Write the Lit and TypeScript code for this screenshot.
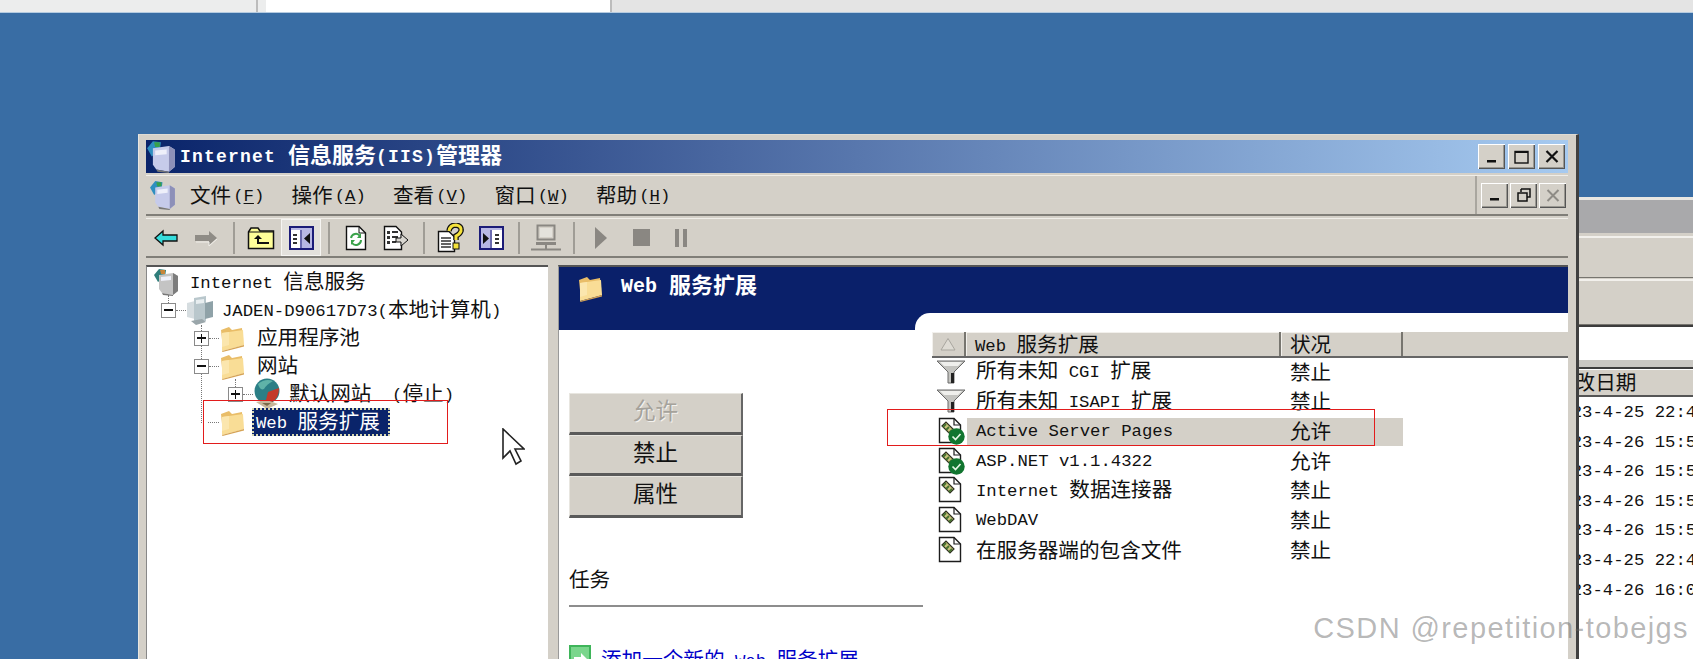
import { LitElement, html, css, svg } from "lit";
import { customElement } from "lit/decorators.js";

const t = (s: string) =>
  s.split(/([\x00-\x7f]+)/).filter(Boolean).map((p) =>
    /^[\x00-\x7f]/.test(p) ? html`<span class="l">${p}</span>` : html`<span>${p}</span>`
  );

const ic = (w: number, h: number, body: unknown, cls = "") =>
  html`<svg class="ic ${cls}" width=${w} height=${h} viewBox="0 0 ${w} ${h}">${body}</svg>`;

const folder = () => ic(26, 27, svg`
  <path d="M2 5 L10 2 L13 5 L23 3 L24 20 L4 25 Z" fill="#e9bd68"/>
  <path d="M3 8 L24 5 L25 20 L3 26 Z" fill="#f9dd96"/>
  <path d="M3 26 L25 20 L25 21.5 L3.5 27 Z" fill="#d5a355"/>
  <path d="M3 8 L10 7 L10 20 L3 22 Z" fill="#fbe6ae"/>`);

const mmc = (w = 27, h = 28, gray = false) => ic(w, h, svg`
  <g transform="scale(${w / 27} ${h / 28})">
  <path d="M1 7 L6 1 L13 2 L12 9 L5 14 Z" fill=${gray ? "#2f7d7a" : "#2f8fc0"}/>
  <path d="M7 2 L12 2 L12 6 L8 6 Z" fill=${gray ? "#c9863a" : "#39a04a"}/>
  <path d="M6 7 L20 5 L25 8 L25 23 L20 27 L9 25 L6 21 Z" fill=${gray ? "#c4c4c4" : "#c6cbea"}/>
  <path d="M20 5 L25 8 L25 23 L20 27 Z" fill=${gray ? "#7c7c7c" : "#8d90b8"}/>
  <path d="M8 9 L18 8 L18 12 L8 13 Z" fill="#eef0fa"/>
  <path d="M9 25 L20 27 L20 28 L10 27 Z" fill="#777"/></g>`);

const server = () => ic(28, 30, svg`
  <path d="M1 8 L9 6 L9 24 L1 22 Z" fill="#d6dde0"/>
  <path d="M8 3 L20 1 L20 26 L8 28 Z" fill="#b9c7cc"/>
  <path d="M10 5 L18 4 L18 8 L10 9 Z" fill="#e8eef0"/>
  <path d="M19 8 L27 6 L27 22 L19 24 Z" fill="#8fa2a8"/>
  <path d="M5 26 L16 24 L20 27 L10 30 Z" fill="#9aa6aa"/>`);

const globe = () => ic(28, 32, svg`
  <circle cx="14" cy="13" r="12.5" fill="#2b7f86"/>
  <path d="M5 6 Q12 0 20 3 Q14 6 11 11 Q7 13 5 6Z" fill="#5fb3a8"/>
  <path d="M15 14 L26 10 Q26 20 19 24 L13 22 Z" fill="#c33a2a"/>
  <path d="M3 24 L14 22 L25 26 L14 31 Z" fill="#c7b79a"/>
  <path d="M9 25 L18 25 L14 28 Z" fill="#7a6a4a"/>`);

const funnel = () => ic(30, 24, svg`
  <path d="M1 1 H29 L18 12 V23 H12 V12 Z" fill="#c4c4c0" stroke="#6a6a6a" stroke-width="1"/>
  <path d="M4 2 H26 L22 6 H8 Z" fill="#efefec"/>
  <path d="M15 13 H18 V23 H15 Z" fill="#222"/>`);

const plug = () => svg`
  <path d="M5 9 L9 5 L17 13 L13 17 Z" fill="#c6c27a" stroke="#2e2e20" stroke-width="1.2"/>
  <path d="M6 10 L9 7 M9 13 L12 10 M12 16 L15 13" stroke="#44702f" stroke-width="1.8"/>`;

const extDoc = (ok: boolean) => ic(28, 28, svg`
  <path d="M2.5 1.5 H17 L23.5 8 V25.5 H2.5 Z" fill="#fff" stroke="#1c1c1c" stroke-width="1.4"/>
  <path d="M17 1.5 V8 H23.5" fill="none" stroke="#1c1c1c" stroke-width="1.2"/>
  ${plug()}
  ${ok ? svg`<circle cx="19.5" cy="19.5" r="8.2" fill="#10752f"/>
  <path d="M15.5 19.5 L18.5 22.5 L23.5 17" fill="none" stroke="#e6f6e6" stroke-width="1.7"/>` : ""}`);

const backArrow = ic(24, 18, svg`<path d="M1 9 L9 2 V6 H23 V12 H9 V16 Z" fill="#35dcdc" stroke="#111" stroke-width="1.3"/>`);
const fwdArrow = ic(24, 18, svg`<path d="M23 9 L15 2 V6 H1 V12 H15 V16 Z" fill="#8f8c86"/><path d="M2 13 H15 V17 L23 10" fill="none" stroke="#f0eee9"/>`);
const upFolder = ic(28, 24, svg`
  <path d="M1.5 6 L4 2 H11 L13 5 H26.5 V22.5 H1.5 Z" fill="#ffff99" stroke="#111" stroke-width="1.5"/>
  <path d="M1.5 6 H26" stroke="#111"/>
  <path d="M11 9 L7 13 H10 V18 H22 V16 H12 V13 H15 Z" fill="#111"/>`);
const paneL = ic(25, 24, svg`
  <rect x="1" y="1" width="23" height="22" fill="#b8b8e4" stroke="#1c1c78" stroke-width="2"/>
  <rect x="2" y="4" width="9" height="18" fill="#fff"/><path d="M12 4 V22" stroke="#1c1c78"/>
  <path d="M4 8h4v2H4zM4 12h4v2H4zM4 16h4v2H4z" fill="#333"/><path d="M21 7 V18 L15 12.5 Z" fill="#111"/>`);
const paneR = ic(25, 24, svg`
  <rect x="1" y="1" width="23" height="22" fill="#b8b8e4" stroke="#1c1c78" stroke-width="2"/>
  <rect x="13" y="4" width="10" height="18" fill="#fff"/><path d="M12 4 V22" stroke="#1c1c78"/>
  <path d="M16 8h4v2h-4zM16 12h4v2h-4zM16 16h4v2h-4z" fill="#333"/><path d="M4 7 V18 L10 12.5 Z" fill="#111"/>`);
const docRefresh = ic(22, 26, svg`
  <path d="M1.5 1.5 H14 L20.5 8 V24.5 H1.5 Z" fill="#fff" stroke="#111" stroke-width="1.4"/><path d="M14 1.5 V8 H20.5" fill="none" stroke="#111"/>
  <path d="M6 13 A5 5 0 0 1 15 11 M16 15 A5 5 0 0 1 7 18" fill="none" stroke="#3aa24a" stroke-width="2"/>
  <path d="M16 8 V13 H12 Z M6 20 V15 H10 Z" fill="#3aa24a"/>`);
const docExport = ic(26, 26, svg`
  <path d="M1.5 1.5 H13 L18.5 7 V24.5 H1.5 Z" fill="#fff" stroke="#111" stroke-width="1.4"/>
  <path d="M4 6h3v3H4zM9 6h6v2H9zM4 11h3v3H4zM9 11h6v2H9zM4 16h3v3H4zM9 16h4v2H9z" fill="#333"/>
  <path d="M13 13 H18 V9 L25 15 L18 21 V17 H13 Z" fill="#d8d6d0" stroke="#111"/>`);
const helpIc = ic(28, 30, svg`
  <path d="M1.5 8.5 H12 L17.5 14 V28.5 H1.5 Z" fill="#fff" stroke="#111" stroke-width="1.4"/>
  <path d="M4 15h10M4 18h10M4 21h10M4 24h10" stroke="#333" stroke-width="1.3"/>
  <path d="M12 8 Q13 2 19 2 Q25 3 24 8 Q23 11 19 13 V17" fill="none" stroke="#111" stroke-width="5.5"/>
  <path d="M12 8 Q13 2 19 2 Q25 3 24 8 Q23 11 19 13 V17" fill="none" stroke="#f5e23a" stroke-width="3"/>
  <rect x="16" y="20" width="6" height="6" fill="#f5e23a" stroke="#111"/>`);
const netPc = ic(30, 28, svg`
  <rect x="6.5" y="1.5" width="17" height="14" fill="#d4d0c8" stroke="#8a8782" stroke-width="2"/>
  <rect x="9" y="4" width="12" height="9" fill="#e4e2dc"/>
  <path d="M5 18h20v3H5z" fill="#8a8782"/><path d="M15 21v4M0 25.5h30" stroke="#8a8782" stroke-width="2"/>`);
const playIc = ic(12, 22, svg`<path d="M0 0 L12 11 L0 22 Z" fill="#8a8782"/>`);
const stopIc = ic(17, 17, svg`<rect width="17" height="17" fill="#8a8782"/>`);
const pauseIc = ic(12, 18, svg`<path d="M0 0h4v18H0zM8 0h4v18H8z" fill="#8a8782"/>`);

const capMin = ic(12, 12, svg`<path d="M1 9h9v2.5H1z" fill="#111"/>`);
const capMax = ic(15, 14, svg`<rect x="1" y="1.5" width="13" height="11.5" fill="none" stroke="#111" stroke-width="1.4"/><path d="M1 2h13" stroke="#111" stroke-width="2"/>`);
const capClose = ic(14, 13, svg`<path d="M1.5 1 L12.5 12 M12.5 1 L1.5 12" stroke="#111" stroke-width="2.2"/>`);
const capRestore = ic(14, 14, svg`<path d="M4 1h9v8h-3M4 1v3" fill="none" stroke="#111" stroke-width="1.5"/><rect x="1" y="5" width="9" height="8" fill="none" stroke="#111" stroke-width="1.5"/>`);
const capCloseOff = ic(14, 13, svg`<path d="M1.5 1 L12.5 12 M12.5 1 L1.5 12" stroke="#8f8c86" stroke-width="2"/>`);

const box = (minus: boolean) => html`<span class="box"><i class="h"></i>${minus ? "" : html`<i class="v"></i>`}</span>`;

const tree = [
  { cls: "l0", icon: mmc(27, 28, true), text: "Internet 信息服务" },
  { cls: "l1", b: true, icon: server(), text: "JADEN-D90617D73(本地计算机)" },
  { cls: "l2", b: false, icon: folder(), text: "应用程序池" },
  { cls: "l2", b: true, icon: folder(), text: "网站" },
  { cls: "l3", b: false, icon: globe(), text: "默认网站  (停止)" },
  { cls: "l2 nobox", icon: folder(), text: "Web 服务扩展", sel: true },
];

const exts = [
  { i: "f", n: "所有未知 CGI 扩展", s: "禁止" },
  { i: "f", n: "所有未知 ISAPI 扩展", s: "禁止" },
  { i: "k", n: "Active Server Pages", s: "允许", sel: true },
  { i: "k", n: "ASP.NET v1.1.4322", s: "允许" },
  { i: "d", n: "Internet 数据连接器", s: "禁止" },
  { i: "d", n: "WebDAV", s: "禁止" },
  { i: "d", n: "在服务器端的包含文件", s: "禁止" },
];

const dates = ["2023-4-25 22:41", "2023-4-26 15:52", "2023-4-26 15:52", "2023-4-26 15:52", "2023-4-26 15:52", "2023-4-25 22:41", "2023-4-26 16:01"];

const menus: [string, string][] = [["文件", "F"], ["操作", "A"], ["查看", "V"], ["窗口", "W"], ["帮助", "H"]];

@customElement("app-root")
export class AppRoot extends LitElement {
  static styles = css`
    :host { display: block; position: relative; width: 1693px; height: 659px; overflow: hidden; background: #396da4;
      font-family: "Noto Sans CJK SC", sans-serif; font-size: 20.6px; color: #111; }
    * { box-sizing: border-box; }
    .l { font-family: "Liberation Mono", monospace; font-size: 17.3px; white-space: pre; vertical-align: 1.5px; }
    .ic { display: block; flex: none; }

    .strip { display: flex; height: 13px; border-bottom: 1px solid #b5cbe0; background: #eceded; }
    .strip .a { width: 256px; } .strip .sep { width: 2px; background: #bcbcbc; } .strip .b { width: 8px; }
    .strip .tab { width: 344px; background: #fff; } .strip .c { flex: 1; background: #e4e4e4; }

    .win { position: absolute; background: #d4d0c8; }
    .back { left: 1100px; top: 197px; width: 700px; height: 462px; border-top: 3px solid #e9e7e2; display: flex; flex-direction: column; }
    .back .ttl { height: 33px; flex: none; background: #a9a9ab; margin-bottom: 3px; }
    .back .bar { height: 42px; flex: none; border-top: 2px solid #f2f0ec; border-bottom: 1px solid #77756f; margin-bottom: 1px; }
    .back .tb2 { height: 46px; margin-bottom: 0; }
    .back .addr { height: 42px; flex: none; background: #fff; border-top: 2px solid #3c3c3c; border-bottom: 7px solid #c9c7c2; }
    .back .lst { flex: 1; background: #fff; border-top: 2px solid #3c3c3c; padding-top: 1px; }
    .back .hdr { height: 27px; background: #d4d0c8; border-bottom: 2px solid #555; padding-left: 454px; line-height: 22px; }
    .back .dt { height: 29.6px; line-height: 24px; padding-left: 451px; }

    .main { left: 138px; top: 134px; width: 1441px; height: 525px; padding: 5px 8px 0 7px; display: flex; flex-direction: column;
      border-top: 1px solid #dedbd4; border-left: 1px solid #e8e6e0; border-right: 3px solid #404040; overflow: hidden; }
    .title { height: 33px; flex: none; background: linear-gradient(90deg, #0a246a 0%, #a6caf0 100%); display: flex; align-items: center; color: #fff; font-weight: 700; padding: 0 3px 0 0; font-size: 22px; }
    .title .l { font-size: 18px; font-weight: 700; letter-spacing: 1.2px; }
    .title .name { margin-left: 3px; flex: 1; white-space: pre; line-height: 28px; padding-bottom: 4px; }
    .caps { display: flex; gap: 3px; align-items: center; }
    .cap { width: 27px; height: 25px; background: #d4d0c8; display: flex; align-items: center; justify-content: center;
      box-shadow: inset 1px 1px 0 #fff, inset -1px -1px 0 #555, inset -2px -2px 0 #9a9891; }
    .menu { margin-top: 2px; height: 41px; flex: none; display: flex; align-items: center; border-top: 1px solid #f0eee9; border-bottom: 2px solid #807e78; padding-left: 3px; }
    .menu .items { display: flex; flex: 1; margin-left: 13px; white-space: pre; }
    .menu .item { width: 101.5px; padding-bottom: 3px; }
    .menu .item .l { margin-left: 2px; }
    .menu u { text-decoration: underline; text-underline-offset: 2px; }
    .menu .mdi { display: flex; gap: 2px; height: 100%; align-items: center; border-left: 2px solid #a9a69f; padding: 0 2px 0 4px; }
    .menu .cap { width: 27px; }
    .tools { margin-top: 2px; height: 40px; flex: none; display: flex; align-items: center; border-top: 1px solid #f0eee9; border-bottom: 2px solid #807e78; }
    .tb { width: 40px; height: 37px; display: flex; align-items: center; justify-content: center; }
    .tb.on { background: #e3e1dc; box-shadow: inset 1px 1px 0 #f6f5f2, inset -1px -1px 0 #f6f5f2; }
    .ts { width: 2px; height: 32px; background: #a09d96; margin: 0 6px 0 7px; }

    .client { margin-top: 7px; flex: 1; display: flex; min-height: 0; }
    .treep { width: 402px; flex: none; background: #fff; border-top: 2px solid #555; border-left: 1px solid #888; padding-top: 1px; position: relative; }
    .row { height: 28px; display: flex; align-items: center; white-space: pre; }
    .row.l0 { padding-left: 6px; } .row.l0 .ic { margin-right: 10px; }
    .row.l1 { padding-left: 14px; } .row.l1 .ic { margin-right: 8px; }
    .row.l2 { padding-left: 47px; } .row.l2 .ic { margin-right: 12px; }
    .row.l3 { padding-left: 81px; } .row.l3 .ic { margin-right: 8px; }
    .row.nobox { padding-left: 61px; }
    .row.l2.nobox .ic { margin-right: 8px; }
    .box { width: 15px; height: 15px; flex: none; border: 1.5px solid #8a8a8a; background: #fff; position: relative; }
    .box i { position: absolute; background: #111; }
    .box .h { left: 2px; right: 2px; top: 5.5px; height: 1.5px; } .box .v { top: 2px; bottom: 2px; left: 5.5px; width: 1.5px; }
    .dots { width: 10px; flex: none; border-top: 1px dotted #777; }
    .nobox .dots { width: 11px; }
    .lbl { display: block; height: 28px; line-height: 24px; padding-bottom: 4px; }
    .lbl.sel { background: #0a246a; color: #fff; outline: 2px dotted #d8d8b0; outline-offset: -2px; padding-left: 4px; margin-left: -1px; width: 138px; }
    .vd { position: absolute; border-left: 1px dotted #777; }
    .vd.a { left: 21px; top: 28px; height: 8px; } .vd.b { left: 54px; top: 58px; height: 98px; } .vd.c { left: 88px; top: 112px; height: 8px; }

    .split { width: 10px; flex: none; background: #d4d0c8; }
    .rightp { flex: 1; background: #fff; position: relative; border-top: 2px solid #555; border-left: 1px solid #999; min-width: 0; }
    .hd { height: 63px; background: #0a206a; color: #fff; font-weight: 700; font-size: 22px; display: flex; align-items: flex-start; padding: 8px 0 0 18px; white-space: pre; }
    .hd .l { font-size: 20px; font-weight: 700; }
    .hd .ttl { margin-left: 18px; height: 16px; line-height: 16px; }
    .side { position: relative; padding: 63px 0 0 10px; width: 364px; }
    .btn { width: 174px; height: 41.5px; background: #d4d0c8; text-align: center; line-height: 30px; font-size: 22.5px; border-top: 1px solid #e8e6e0; border-left: 1px solid #e8e6e0; border-right: 2px solid #666; border-bottom: 3px solid #5a5a5a; }
    .btn.off { color: #a5a29b; text-shadow: 1px 1px 0 #f4f2ee; }
    .task { margin-top: 46px; line-height: 28px; }
    .rule { height: 2px; background: #8d8d8d; margin-top: 13px; }
    .link { margin-top: 38px; display: flex; align-items: flex-start; height: 28px; color: #0000c8; white-space: pre; line-height: 26px; }
    .link .ic { margin-right: 10px; }

    .panel { position: absolute; left: 356px; top: 46px; right: 0; bottom: 0; background: #fff; border-top-left-radius: 15px; padding: 19px 0 0 17px; }
    .lhead { height: 26px; display: flex; background: #d4d0c8; border-bottom: 2px solid #666; line-height: 22px; }
    .lhead > div { border-right: 2px solid #77756f; box-shadow: inset 1px 1px 0 #f2f0ec; white-space: pre; }
    .lhead .c0 { width: 34px; display: flex; align-items: center; justify-content: center; }
    .lhead .c1 { width: 315px; padding-left: 9px; } .lhead .c2 { width: 122px; padding-left: 9px; }
    .lhead .c3 { flex: 1; border-right: none; box-shadow: none; }
    .lrow { height: 29.67px; width: 471px; display: flex; align-items: center; white-space: pre; }
    .lrow .ico { width: 35px; flex: none; display: flex; justify-content: center; padding: 0 0 2px 3px; }
    .lrow .cells { flex: 1; display: flex; height: 28px; align-items: center; }
    .lrow.sel .cells { background: #d4d0c8; }
    .lrow .n { width: 314px; padding: 0 0 4px 9px; line-height: 24px; } .lrow .s { padding: 0 0 4px 9px; line-height: 24px; }

    .red { position: absolute; border: 1px solid #e21c1c; pointer-events: none; }
    .red.a { left: 203px; top: 400px; width: 245px; height: 44px; }
    .red.b { left: 887px; top: 409px; width: 488px; height: 37px; }
    .cursor { position: absolute; left: 501px; top: 428px; }
    .wm { position: absolute; right: 4px; top: 609px; font-family: "Liberation Sans", sans-serif; font-size: 29px; letter-spacing: 1.4px; line-height: 38px; color: rgba(95,95,95,.45); white-space: pre; }
  `;

  render() {
    return html`
      <div class="strip"><div class="a"></div><div class="sep"></div><div class="b"></div><div class="tab"></div><div class="sep"></div><div class="c"></div></div>

      <div class="win back">
        <div class="ttl"></div>
        <div class="bar"></div>
        <div class="bar tb2"></div>
        <div class="addr"></div>
        <div class="lst">
          <div class="hdr">修改日期</div>
          ${dates.map((d) => html`<div class="dt"><span class="l">${d}</span></div>`)}
        </div>
      </div>

      <div class="win main">
        <div class="title">
          ${mmc(31, 33)}
          <div class="name">${t("Internet 信息服务(IIS)管理器")}</div>
          <div class="caps"><div class="cap">${capMin}</div><div class="cap">${capMax}</div><div class="cap">${capClose}</div></div>
        </div>
        <div class="menu">
          ${mmc(28, 30)}
          <div class="items">
            ${menus.map(([c, k]) => html`<div class="item">${c}<span class="l">(<u>${k}</u>)</span></div>`)}
          </div>
          <div class="mdi"><div class="cap">${capMin}</div><div class="cap">${capRestore}</div><div class="cap">${capCloseOff}</div></div>
        </div>
        <div class="tools">
          <div class="tb">${backArrow}</div><div class="tb">${fwdArrow}</div><div class="ts"></div>
          <div class="tb">${upFolder}</div><div class="tb on">${paneL}</div><div class="ts"></div>
          <div class="tb">${docRefresh}</div><div class="tb">${docExport}</div><div class="ts"></div>
          <div class="tb">${helpIc}</div><div class="tb">${paneR}</div><div class="ts"></div>
          <div class="tb">${netPc}</div><div class="ts"></div>
          <div class="tb">${playIc}</div><div class="tb">${stopIc}</div><div class="tb">${pauseIc}</div>
        </div>
        <div class="client">
          <div class="treep">
            <i class="vd a"></i><i class="vd b"></i><i class="vd c"></i>
            ${tree.map((r) => html`
              <div class="row ${r.cls}">
                ${r.b === undefined ? "" : html`${box(r.b)}<span class="dots"></span>`}
                ${r.cls.includes("nobox") ? html`<span class="dots"></span>` : ""}
                ${r.icon}
                <span class="lbl ${r.sel ? "sel" : ""}">${t(r.text)}</span>
              </div>`)}
          </div>
          <div class="split"></div>
          <div class="rightp">
            <div class="hd">${folder()}<div class="ttl">${t("Web 服务扩展")}</div></div>
            <div class="panel">
              <div class="lhead">
                <div class="c0">${ic(16, 14, svg`<path d="M8 1.5 L15 13 H1 Z" fill="#dedbd4" stroke="#a9a69f"/>`)}</div>
                <div class="c1">${t("Web 服务扩展")}</div>
                <div class="c2">状况</div>
                <div class="c3"></div>
              </div>
              ${exts.map((e) => html`
                <div class="lrow ${e.sel ? "sel" : ""}">
                  <div class="ico">${e.i === "f" ? funnel() : extDoc(e.i === "k")}</div>
                  <div class="cells"><div class="n">${t(e.n)}</div><div class="s">${e.s}</div></div>
                </div>`)}
            </div>
            <div class="side">
              <div class="btn off">允许</div>
              <div class="btn">禁止</div>
              <div class="btn">属性</div>
              <div class="task">任务</div>
              <div class="rule"></div>
              <div class="link">
                ${ic(22, 26, svg`<rect width="22" height="26" fill="#3fb55a"/><rect x="2" y="2" width="18" height="22" fill="#7ad68c"/><path d="M5 12h7V8l6 6-6 6v-4H5z" fill="#fff"/>`)}
                <span>${t("添加一个新的 Web 服务扩展...")}</span>
              </div>
            </div>
          </div>
        </div>
      </div>

      <div class="red a"></div>
      <div class="red b"></div>
      <div class="cursor">${ic(24, 38, svg`<path d="M2 1 V30 L9 23 L15 36 L20 33 L14 21 H23 Z" fill="#fff" stroke="#222" stroke-width="1.6"/>`)}</div>
      <div class="wm">CSDN @repetition-tobejgs</div>
    `;
  }
}
